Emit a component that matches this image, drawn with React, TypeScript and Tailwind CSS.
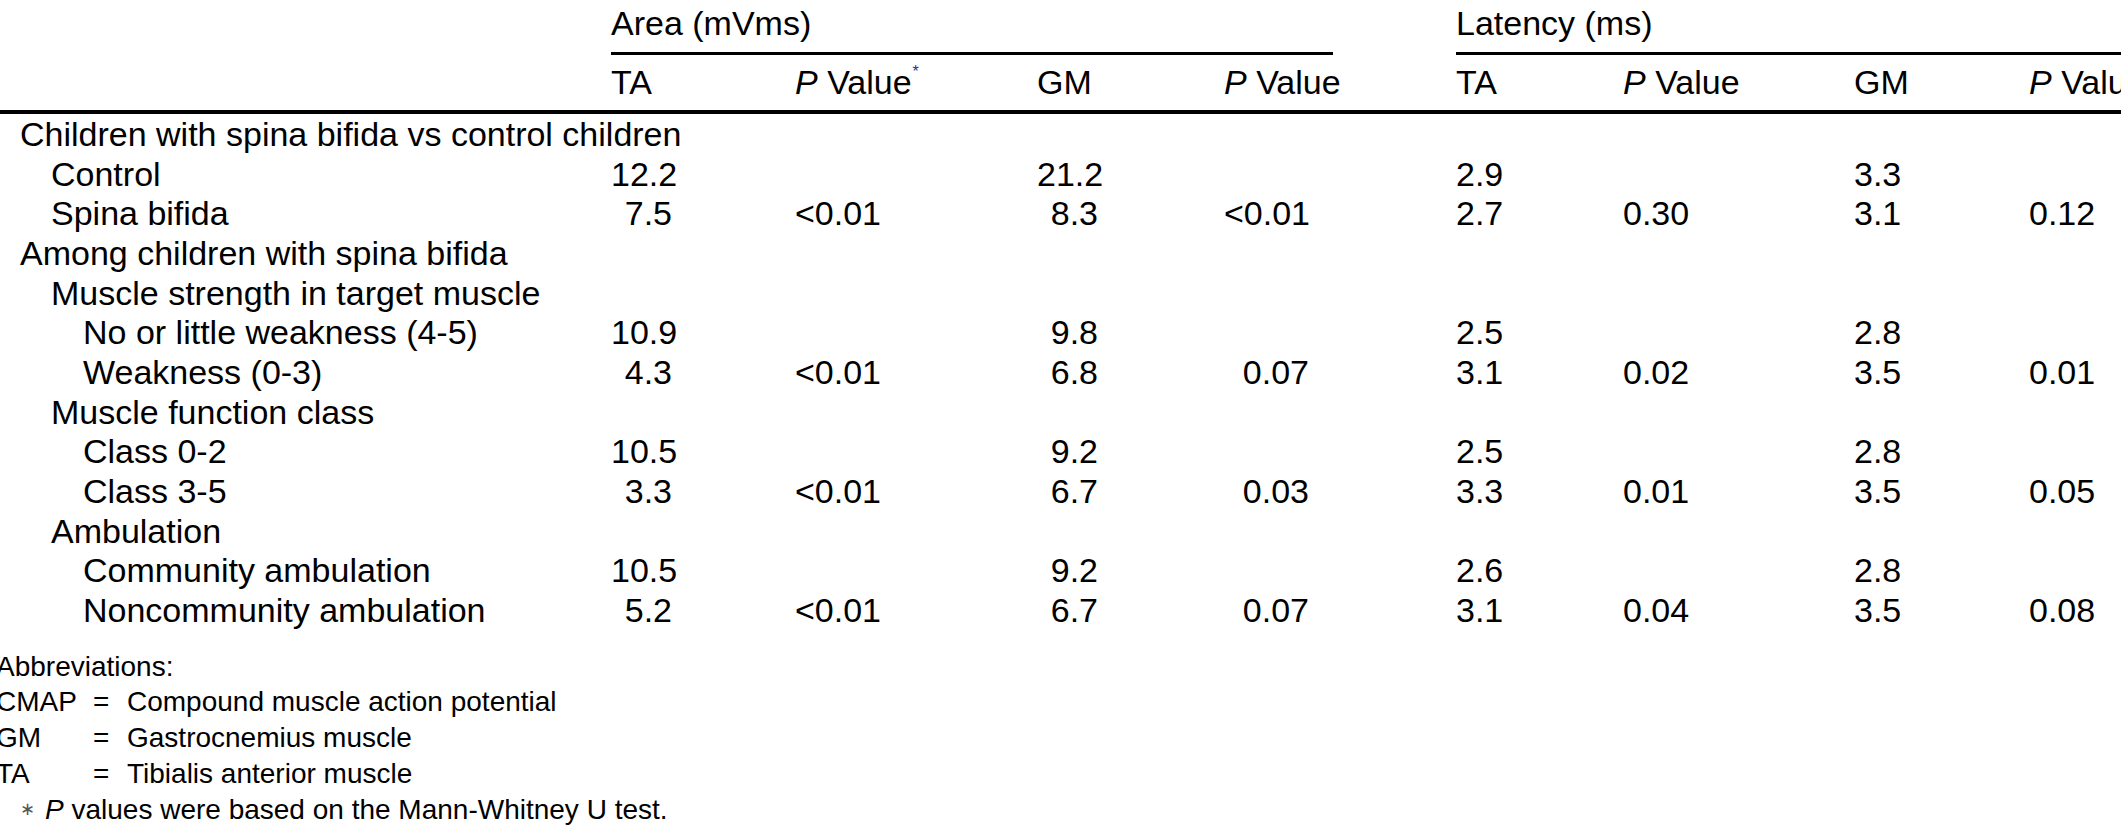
import React from 'react'

type Row = {
  label: string
  level: 0 | 1 | 2
  v?: string[]
}

const rows: Row[] = [
  { label: 'Children with spina bifida vs control children', level: 0 },
  { label: 'Control', level: 1, v: ['12.2', '', '21.2', '', '2.9', '', '3.3', ''] },
  { label: 'Spina bifida', level: 1, v: ['7.5', '<0.01', '8.3', '<0.01', '2.7', '0.30', '3.1', '0.12'] },
  { label: 'Among children with spina bifida', level: 0 },
  { label: 'Muscle strength in target muscle', level: 1 },
  { label: 'No or little weakness (4-5)', level: 2, v: ['10.9', '', '9.8', '', '2.5', '', '2.8', ''] },
  { label: 'Weakness (0-3)', level: 2, v: ['4.3', '<0.01', '6.8', '0.07', '3.1', '0.02', '3.5', '0.01'] },
  { label: 'Muscle function class', level: 1 },
  { label: 'Class 0-2', level: 2, v: ['10.5', '', '9.2', '', '2.5', '', '2.8', ''] },
  { label: 'Class 3-5', level: 2, v: ['3.3', '<0.01', '6.7', '0.03', '3.3', '0.01', '3.5', '0.05'] },
  { label: 'Ambulation', level: 1 },
  { label: 'Community ambulation', level: 2, v: ['10.5', '', '9.2', '', '2.6', '', '2.8', ''] },
  { label: 'Noncommunity ambulation', level: 2, v: ['5.2', '<0.01', '6.7', '0.07', '3.1', '0.04', '3.5', '0.08'] },
]

const cols = 'grid grid-cols-[611px_184px_242px_187px_232px_167px_231px_175px_200px]'

const indent = ['pl-[20px]', 'pl-[51px]', 'pl-[83px]']

function PVal({ star }: { star?: boolean }) {
  return (
    <span className="whitespace-nowrap">
      <i>P</i> Value
      {star && <sup className="text-[16px] text-[#2b2b8c] align-[9px] ml-[1px]">*</sup>}
    </span>
  )
}

function Cell({ value, idx }: { value: string; idx: number }) {
  if (idx === 0 || idx === 2) {
    return (
      <div>
        <span className="inline-block w-[61px] text-right">{value}</span>
      </div>
    )
  }
  if (idx === 3) {
    return (
      <div>
        <span className="inline-block w-[85px] text-right">{value}</span>
      </div>
    )
  }
  return <div className="whitespace-nowrap">{value}</div>
}

export default function App() {
  return (
    <div className="w-[2121px] h-[830px] overflow-hidden bg-white text-black font-['Liberation_Sans',Arial,sans-serif]">
      {/* table */}
      <div className="text-[34px]">
        {/* header 1 */}
        <div className={`${cols} h-[55px]`}>
          <div />
          <div className="col-span-4 mr-[123px] h-[55px] border-b-[3px] border-black pt-[3px] leading-[40px] whitespace-nowrap">
            Area (mVms)
          </div>
          <div className="col-span-4 h-[55px] border-b-[3px] border-black pt-[3px] leading-[40px] whitespace-nowrap">
            Latency (ms)
          </div>
        </div>

        {/* header 2 */}
        <div className={`${cols} h-[59px] border-b-[4px] border-black pt-[7px] leading-[40px]`}>
          <div />
          <div>TA</div>
          <div><PVal star /></div>
          <div>GM</div>
          <div><PVal /></div>
          <div>TA</div>
          <div><PVal /></div>
          <div>GM</div>
          <div><PVal /></div>
        </div>

        {/* body */}
        <div className="pt-[1px] leading-[39.67px]">
          {rows.map((r, i) => (
            <div key={i} className={cols}>
              <div className={`${indent[r.level]} whitespace-nowrap ${r.v ? '' : 'col-span-9'}`}>{r.label}</div>
              {r.v && r.v.map((val, j) => <Cell key={j} value={val} idx={j} />)}
            </div>
          ))}
        </div>
      </div>

      {/* footer */}
      <div className="mt-[18px] -ml-[4px] text-[28px] leading-[35.7px]">
        <div>Abbreviations:</div>
        {[
          ['CMAP', 'Compound muscle action potential'],
          ['GM', 'Gastrocnemius muscle'],
          ['TA', 'Tibialis anterior muscle'],
        ].map(([a, d]) => (
          <div key={a} className="flex whitespace-nowrap">
            <span className="w-[97px]">{a}</span>
            <span className="w-[34px]">=</span>
            <span>{d}</span>
          </div>
        ))}
        <div className="flex items-center whitespace-nowrap">
          <span className="w-[49px] pl-[24px] text-[18px] text-[#555]">∗</span>
          <span>
            <i>P</i> values were based on the Mann-Whitney U test.
          </span>
        </div>
      </div>
    </div>
  )
}
